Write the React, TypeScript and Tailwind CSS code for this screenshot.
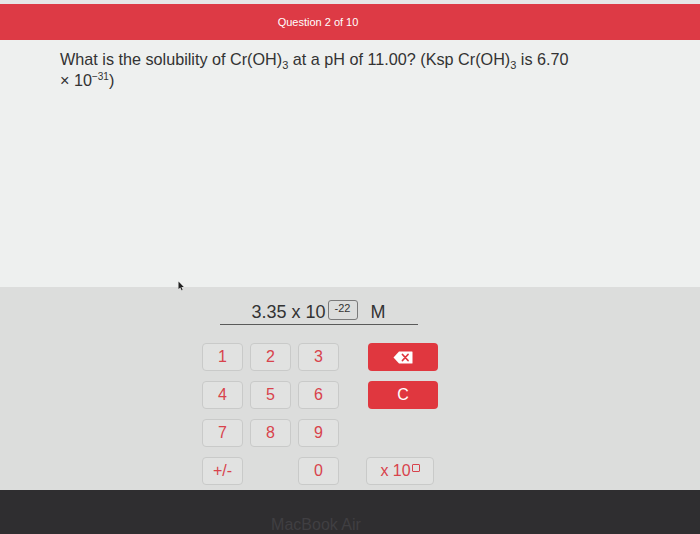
import React from "react";

const keys = ["1", "2", "3", "4", "5", "6", "7", "8", "9"];

function KeyButton({ label, className = "" }: { label: React.ReactNode; className?: string }) {
  return (
    <button
      type="button"
      className={`flex h-[28px] items-center justify-center rounded-[4px] border border-[#c9cac9] bg-[#e1e2e1] text-[16px] text-[#d8434c] ${className}`}
    >
      {label}
    </button>
  );
}

function BackspaceIcon() {
  return (
    <svg width="20" height="13" viewBox="0 0 20 13">
      <path d="M6 0.5 H19 a0.5 0.5 0 0 1 0.5 0.5 V12 a0.5 0.5 0 0 1 -0.5 0.5 H6 L0.5 6.5 Z" fill="#ffffff" />
      <path d="M9.5 3.5 L15 9.5 M15 3.5 L9.5 9.5" stroke="#e0373f" strokeWidth="1.8" strokeLinecap="round" />
    </svg>
  );
}

function Sub({ children }: { children: React.ReactNode }) {
  return <span className="relative top-[4px] text-[11px] leading-none">{children}</span>;
}

export default function App() {
  return (
    <div
      className="relative flex h-[534px] w-[700px] flex-col overflow-hidden bg-[#eef0ef]"
      style={{ fontFamily: '"Liberation Sans", Arial, sans-serif' }}
    >
      <div className="h-[4px] bg-[#e6e6e6]" />
      <header className="flex h-[36px] items-center justify-center bg-[#dd3a45]">
        <span className="-ml-[64px] text-[11px] text-white">Question 2 of 10</span>
      </header>

      <section className="h-[247px] bg-[#eef0ef] pl-[60px] pt-[9px]">
        <p className="text-[16.2px] leading-[21px] text-[#333333]">
          What is the solubility of Cr(OH)<Sub>3</Sub> at a pH of 11.00? (Ksp Cr(OH)<Sub>3</Sub> is 6.70
          <br />× 10<span className="relative -top-[6px] text-[10px] leading-none">−31</span>)
        </p>
      </section>

      <section className="flex h-[203px] flex-col bg-[#dcdddc]">
        <div className="ml-[220px] mt-[8px] flex h-[30px] w-[198px] items-end justify-center border-b-[1.5px] border-[#5a5a5a] pb-[3px] text-[18px] leading-none text-[#333333]">
          <span className="ml-[-1px]">3.35 x 10</span>
          <span className="mb-[1px] ml-[2px] flex h-[20px] w-[30px] items-start justify-center rounded-[3px] border border-[#7a7a7a] pt-[2px] text-[11px] leading-none">
            -22
          </span>
          <span className="ml-[13px]">M</span>
        </div>

        <div className="ml-[202px] mt-[18px] grid grid-cols-[41px_41px_41px_70px] gap-x-[7px] gap-y-[10px]">
          {keys.slice(0, 3).map((k) => (
            <KeyButton key={k} label={k} />
          ))}
          <button
            type="button"
            className="ml-[22px] flex h-[28px] w-[70px] items-center justify-center rounded-[4px] bg-[#e0373f]"
          >
            <BackspaceIcon />
          </button>

          {keys.slice(3, 6).map((k) => (
            <KeyButton key={k} label={k} />
          ))}
          <button
            type="button"
            className="ml-[22px] flex h-[28px] w-[70px] items-center justify-center rounded-[4px] bg-[#e0373f] text-[16px] text-white"
          >
            C
          </button>

          {keys.slice(6, 9).map((k) => (
            <KeyButton key={k} label={k} />
          ))}
          <div />

          <KeyButton label="+/-" />
          <div />
          <KeyButton label="0" />
          <KeyButton
            className="ml-[20px] w-[68px]"
            label={
              <span className="flex items-center">
                x 10
                <span className="-mt-[6px] ml-[1px] inline-block h-[8px] w-[8px] rounded-[1px] border border-[#d8434c]" />
              </span>
            }
          />
        </div>
      </section>

      <footer className="flex flex-1 items-end justify-center bg-[#2f2e30]">
        <span className="-mb-[3px] -ml-[68px] text-[16px] text-[#403f42]">MacBook Air</span>
      </footer>

      <svg className="absolute left-[178px] top-[281px]" width="7" height="10" viewBox="0 0 7 10">
        <path d="M0.5 0.5 L0.5 8 L2.3 6.4 L3.6 9.3 L4.6 8.9 L3.4 6 L5.8 6 Z" fill="#222" />
      </svg>
    </div>
  );
}
